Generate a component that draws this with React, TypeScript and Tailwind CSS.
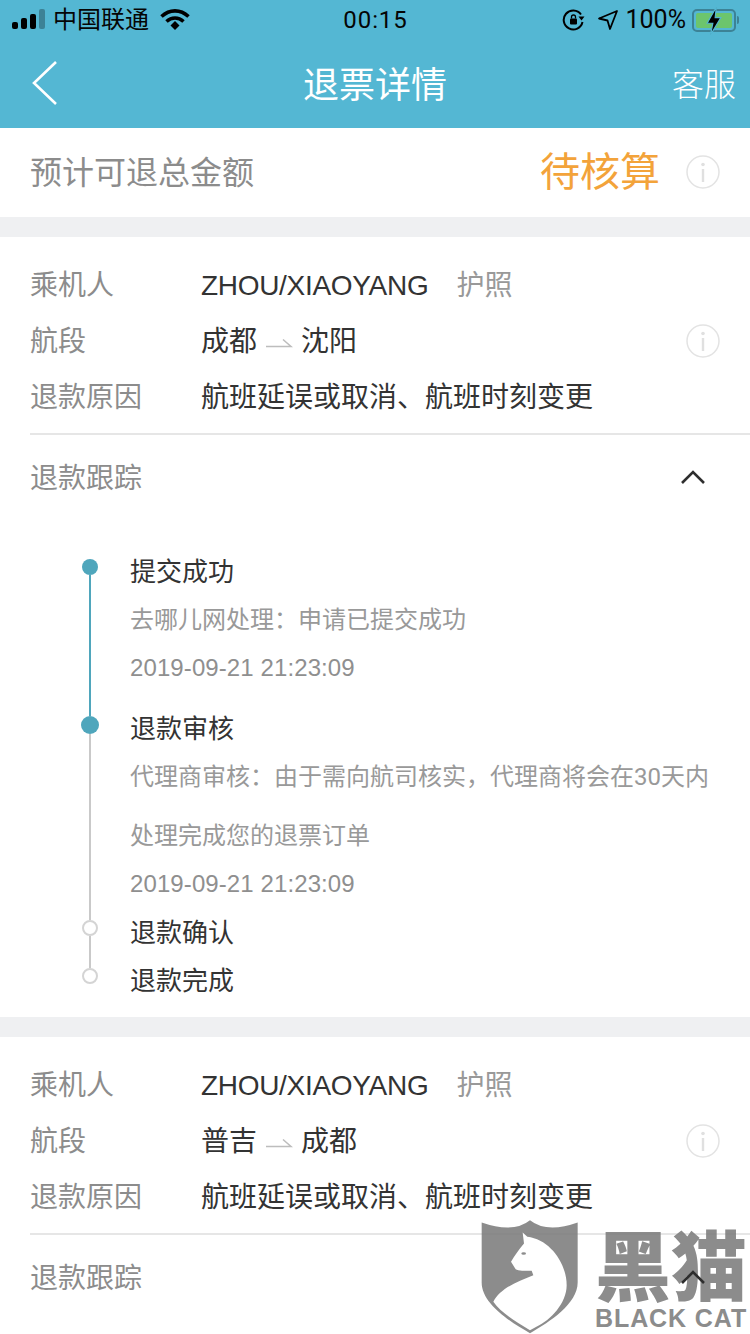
import type { ReactNode } from "react";

const CJK = "font-['Roboto','Noto_Sans_CJK_SC',sans-serif]";
const LATIN = "font-['Liberation_Sans','Noto_Sans_CJK_SC',sans-serif]";

const InfoIcon = () => (
  <svg width="36" height="36" viewBox="0 0 36 36" fill="none" className="mb-[2px] shrink-0">
    <circle cx="18" cy="18" r="16" stroke="#e3e3e3" strokeWidth="1.5" />
    <circle cx="18" cy="10.5" r="1.8" fill="#e0e0e0" />
    <path d="M18 15v13" stroke="#e0e0e0" strokeWidth="2.4" />
  </svg>
);

const ChevronUp = () => (
  <svg width="26" height="16" viewBox="0 0 26 16" fill="none" className="relative z-10 mt-[-4px]">
    <path d="M2 14 13 3l11 11" stroke="#2e2e2e" strokeWidth="2.6" />
  </svg>
);

const RouteArrow = () => (
  <svg width="28" height="14" viewBox="0 0 28 14" fill="none" className="mx-2">
    <path d="M1 11.5h25L18 4.5" stroke="#bdbdbd" strokeWidth="1.6" />
  </svg>
);

const StatusBar = () => (
  <div className="flex h-10 items-center justify-between pl-3 pr-[11px] text-[24px] text-[#050505]">
    <div className="flex w-[260px] items-center">
      <svg width="34" height="24" viewBox="0 0 34 24" className="mr-2">
        <rect x="0" y="14" width="6" height="7" rx="2" fill="#000" />
        <rect x="9" y="10" width="6" height="11" rx="2" fill="#000" />
        <rect x="18" y="6" width="6" height="15" rx="2" fill="#000" />
        <rect x="27" y="1" width="6" height="20" rx="2" fill="#3c8296" />
      </svg>
      <span className="ml-[-1px] leading-none">中国联通</span>
      <svg width="30" height="24" viewBox="0 0 30 24" fill="none" className="ml-[11px]">
        <path d="M1.5 8.5c8-7.5 19-7.5 27 0" stroke="#000" strokeWidth="3.6" />
        <path d="M6.5 13.5c5-4.6 12-4.6 17 0" stroke="#000" strokeWidth="3.6" />
        <path d="M10.5 17.5 15 13l4.5 4.5L15 22z" fill="#000" />
      </svg>
    </div>
    <span className="text-[24px] tracking-[0.9px]">00:15</span>
    <div className="flex w-[260px] items-center justify-end">
      <svg width="24" height="24" viewBox="0 0 24 24" fill="none" className="mr-[11px]">
        <path d="M20.5 14A9.5 9.5 0 1 1 19 6.5" stroke="#000" strokeWidth="2" />
        <path d="M16.5 8.5h6l-3 4z" fill="#000" />
        <rect x="8" y="10.5" width="7" height="6" rx="1" fill="#000" />
        <path d="M9.5 10.5V9a2 2 0 0 1 4 0v1.5" stroke="#000" strokeWidth="1.3" />
      </svg>
      <svg width="22" height="22" viewBox="0 0 22 22" fill="none" className="mr-[7px]">
        <path d="M20 2 2 9.5l8.5 2L13 20z" stroke="#000" strokeWidth="1.8" strokeLinejoin="round" />
      </svg>
      <span className="mr-[6px] text-[25px]">100%</span>
      <div className="relative flex items-center">
        <div className="h-[23px] w-[44px] rounded-[5px] border-2 border-[#3c8296] p-[2px]">
          <div className="h-full w-full rounded-[2px] bg-[#6cc56d]" />
        </div>
        <div className="ml-[1px] h-[8px] w-[2px] rounded-r-sm bg-[#3c8296]" />
        <svg width="16" height="28" viewBox="0 0 14 24" className="absolute left-[14px] top-[-2px]">
          <path d="M9 0 1 14h5l-2 10 9-15H8z" fill="#000" stroke="#54b7d3" strokeWidth="1" />
        </svg>
      </div>
    </div>
  </div>
);

const NavBar = () => (
  <div className="relative flex h-[88px] items-center justify-between pl-[31px] pr-[14px] text-white">
    <svg width="28" height="46" viewBox="0 0 28 46" fill="none" className="mt-[-2px]">
      <path d="M25 2 3 23l22 21" stroke="#fff" strokeWidth="2.6" />
    </svg>
    <div className="absolute inset-x-0 top-0 flex h-[88px] items-center justify-center text-[36px] leading-none">
      <span className="mt-[4px]">退票详情</span>
    </div>
    <span className="mt-[2px] text-[32px] font-light leading-none">客服</span>
  </div>
);

const InfoRow = ({ label, children, info }: { label: string; children: ReactNode; info?: boolean }) => (
  <div className="flex h-14 items-center pr-[29px] text-[28px]">
    <span className="w-[171px] shrink-0 text-[#8c8c8c]">{label}</span>
    <div className="flex flex-1 items-center text-[#333]">{children}</div>
    {info && <InfoIcon />}
  </div>
);

const PassengerInfo = ({ from, to }: { from: string; to: string }) => (
  <>
    <InfoRow label="乘机人">
      <span className={`${LATIN} tracking-[-0.3px]`}>ZHOU/XIAOYANG</span>
      <span className="ml-[28px] text-[#999]">护照</span>
    </InfoRow>
    <InfoRow label="航段" info>
      <span>{from}</span>
      <RouteArrow />
      <span>{to}</span>
    </InfoRow>
    <InfoRow label="退款原因">
      <span>航班延误或取消、航班时刻变更</span>
    </InfoRow>
  </>
);

const TrackingHeader = () => (
  <div className="mt-[7px] flex h-[89px] items-center border-t-2 border-[#e6e6e6] pr-11 text-[28px] text-[#8c8c8c]">
    <span className="flex-1">退款跟踪</span>
    <ChevronUp />
  </div>
);

type Step = {
  title: string;
  desc?: string[];
  time?: string;
  dotClass: string;
  spacerClass: string;
  lineClass: string;
  bottomClass: string;
};

const steps: Step[] = [
  {
    title: "提交成功",
    desc: ["去哪儿网处理：申请已提交成功"],
    time: "2019-09-21 21:23:09",
    dotClass: "mt-[11px] h-4 w-4 bg-[#4fa6bc]",
    spacerClass: "h-0",
    lineClass: "bg-[#4fa6bc]",
    bottomClass: "pb-[13px]",
  },
  {
    title: "退款审核",
    desc: ["代理商审核：由于需向航司核实，代理商将会在30天内", "处理完成您的退票订单"],
    time: "2019-09-21 21:23:09",
    dotClass: "h-[18px] w-[18px] bg-[#4fa6bc]",
    spacerClass: "h-[11px] bg-[#4fa6bc]",
    lineClass: "bg-[#c9c9c9]",
    bottomClass: "pb-px",
  },
  {
    title: "退款确认",
    dotClass: "h-4 w-4 border-2 border-[#d4d4d4] bg-white",
    spacerClass: "h-[11px] bg-[#c9c9c9]",
    lineClass: "bg-[#c9c9c9]",
    bottomClass: "",
  },
  {
    title: "退款完成",
    dotClass: "h-4 w-4 border-2 border-[#d4d4d4] bg-white",
    spacerClass: "h-[11px] bg-[#c9c9c9]",
    lineClass: "",
    bottomClass: "",
  },
];

const Timeline = () => (
  <div className="pb-3 pl-20 pt-[26px]">
    {steps.map((step) => (
      <div key={step.title} className="flex">
        <div className="flex w-5 shrink-0 flex-col items-center">
          <div className={`w-[2px] ${step.spacerClass}`} />
          <div className={`shrink-0 rounded-full ${step.dotClass}`} />
          <div className={`w-[2px] flex-1 ${step.lineClass}`} />
        </div>
        <div className={`ml-[30px] ${step.bottomClass}`}>
          <div className="text-[26px] leading-[48px] text-[#333]">{step.title}</div>
          {step.desc?.map((line, i) => (
            <div key={line} className={`text-[24px] leading-[48px] text-[#999] ${i === 1 ? "mt-[11px]" : ""}`}>
              {line}
            </div>
          ))}
          {step.time && (
            <div className={`${LATIN} text-[24px] leading-[48px] tracking-[0.1px] text-[#8f8f8f]`}>{step.time}</div>
          )}
        </div>
      </div>
    ))}
  </div>
);

const Watermark = () => (
  <div className="absolute bottom-0 left-[480px] flex h-[116px] w-[270px] items-start opacity-90">
    <svg width="100" height="116" viewBox="90 55 300 345" className="shrink-0">
      <path
        d="M95 67Q190 100 240 60Q290 100 383 67V247C383 310 300 365 240 399C180 365 95 310 95 247Z"
        fill="#808080"
      />
      <path
        d="M218 97L232 110C300 118 350 190 350 255C350 310 300 360 262 378L240 390C190 360 150 335 130 305C150 265 200 245 250 225L245 212C225 212 205 212 197 207L183 185C195 165 205 150 222 130Z"
        fill="#fff"
      />
      <ellipse cx="221" cy="160" rx="7" ry="4" fill="#808080" />
    </svg>
    <div className="ml-[15px] mt-[6px] flex flex-col">
      <span className="text-[76px] font-black leading-[76px] text-[#808080] font-['Noto_Sans_CJK_SC',sans-serif]">黑猫</span>
      <span className="mt-[5px] text-[25px] font-bold leading-[26px] tracking-[0.9px] text-[#808080] font-['Liberation_Sans',sans-serif]">
        BLACK CAT
      </span>
    </div>
  </div>
);

export default function App() {
  return (
    <div className={`relative h-[1334px] w-[750px] overflow-hidden bg-[#eff0f2] ${CJK}`}>
      <header className="bg-[#54b7d3]">
        <StatusBar />
        <NavBar />
      </header>

      <div className="flex h-[89px] items-center bg-white pl-[30px] pr-[29px]">
        <span className="flex-1 text-[32px] text-[#8c8c8c]">预计可退总金额</span>
        <span className="mr-[25px] text-[40px] text-[#f3a33a]">待核算</span>
        <InfoIcon />
      </div>

      <section className="mt-5 bg-white pl-[30px] pt-[21px]">
        <PassengerInfo from="成都" to="沈阳" />
        <TrackingHeader />
        <div className="-ml-[30px]">
          <Timeline />
        </div>
      </section>

      <section className="mt-5 h-[400px] bg-white pl-[30px] pt-[21px]">
        <PassengerInfo from="普吉" to="成都" />
        <TrackingHeader />
      </section>

      <Watermark />
    </div>
  );
}
